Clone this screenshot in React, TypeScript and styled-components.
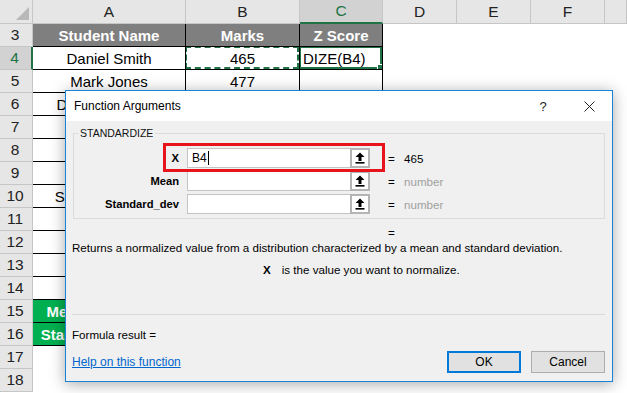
import styled, { createGlobalStyle } from "styled-components"

const GlobalStyle = createGlobalStyle`
  html, body {
    margin: 0;
    padding: 0;
    background: #fff;
  }
  body {
    font-family: "Liberation Sans", Arial, sans-serif;
  }
`

const Stage = styled.div`
  position: relative;
  width: 627px;
  height: 393px;
  overflow: hidden;
  background: #fff;
`

/* ---------- spreadsheet ---------- */

const Sheet = styled.div`
  display: grid;
  grid-template-columns: 33px 153px 114px 83px 74px 74px 74px 1fr;
  grid-template-rows: 24px;
  grid-auto-rows: 23px;
  font-family: "Liberation Sans", Arial, sans-serif;
  font-size: 15px;
  color: #000;
`

const Corner = styled.div`
  position: relative;
  background: #e6e6e6;
  border-right: 1px solid #c6c6c6;
  border-bottom: 1px solid #c6c6c6;
  box-sizing: border-box;
  &::after {
    content: "";
    position: absolute;
    right: 3px;
    bottom: 3px;
    border-style: solid;
    border-width: 0 0 13px 13px;
    border-color: transparent transparent #b8b8b8 transparent;
  }
`

const ColHeader = styled.div<{ $selected?: boolean }>`
  display: flex;
  align-items: center;
  justify-content: center;
  box-sizing: border-box;
  font-size: 15.5px;
  background: ${p => (p.$selected ? "#d2d2d2" : "#e6e6e6")};
  color: ${p => (p.$selected ? "#217346" : "#222")};
  border-right: 1px solid #c6c6c6;
  border-bottom: ${p => (p.$selected ? "2px solid #217346" : "1px solid #c6c6c6")};
`

const RowHeader = styled.div<{ $selected?: boolean }>`
  display: flex;
  align-items: center;
  justify-content: center;
  box-sizing: border-box;
  padding-right: 2px;
  font-size: 15.5px;
  background: ${p => (p.$selected ? "#d2d2d2" : "#e6e6e6")};
  color: ${p => (p.$selected ? "#217346" : "#222")};
  border-right: ${p => (p.$selected ? "2px solid #217346" : "1px solid #c6c6c6")};
  border-bottom: 1px solid #c6c6c6;
`

type CellKind = "head" | "body" | "total" | "empty"

const Cell = styled.div<{ $kind: CellKind; $align?: "left" | "center" }>`
  position: relative;
  display: flex;
  align-items: center;
  justify-content: ${p => (p.$align === "left" ? "flex-start" : "center")};
  padding: 0 3px;
  box-sizing: border-box;
  overflow: hidden;
  white-space: nowrap;
  font-weight: ${p => (p.$kind === "head" || p.$kind === "total" ? 700 : 400)};
  background: ${p =>
    p.$kind === "head" ? "#7f7f7f" : p.$kind === "total" ? "#00b050" : "#fff"};
  color: ${p => (p.$kind === "head" || p.$kind === "total" ? "#fff" : "#000")};
  border-right: ${p => (p.$kind === "empty" ? "none" : "1px solid #000")};
  border-bottom: ${p => (p.$kind === "empty" ? "none" : "1px solid #000")};
`

const CopyMarquee = styled.div`
  position: absolute;
  inset: -1px 0 0 -1px;
  border: 2px dashed #217346;
  pointer-events: none;
`

const ActiveFrame = styled.div`
  position: absolute;
  inset: -1px 0 0 -1px;
  border: 2px solid #217346;
  pointer-events: none;
  &::after {
    content: "";
    position: absolute;
    right: -4px;
    bottom: -4px;
    width: 5px;
    height: 5px;
    background: #217346;
    border: 1px solid #fff;
  }
`

const CellText = styled.span`
  position: relative;
`

/* ---------- dialog ---------- */

const Dialog = styled.div`
  position: absolute;
  left: 65px;
  top: 90px;
  width: 548px;
  height: 292px;
  box-sizing: border-box;
  border: 1px solid #1883d7;
  background: #f0f0f0;
  box-shadow: 0 2px 14px rgba(0, 0, 0, 0.35);
  display: flex;
  flex-direction: column;
  font-family: "Liberation Sans", Arial, sans-serif;
  font-size: 11.6px;
  color: #000;
`

const TitleBar = styled.div`
  height: 30px;
  flex: none;
  display: flex;
  align-items: center;
  background: #fff;
  padding-left: 8px;
`

const Title = styled.div`
  flex: 1;
  font-size: 12px;
`

const TitleButton = styled.div`
  width: 46px;
  height: 30px;
  display: flex;
  align-items: center;
  justify-content: center;
  font-size: 13px;
  color: #222;
`

const Body = styled.div`
  flex: 1;
  display: flex;
  flex-direction: column;
  padding: 12px 7px 0 7px;
`

const Group = styled.div`
  position: relative;
  height: 86px;
  box-sizing: border-box;
  border: 1px solid #dcdcdc;
  padding-top: 14px;
  display: flex;
  flex-direction: column;
  gap: 3px;
`

const Legend = styled.div`
  position: absolute;
  left: 4px;
  top: -7px;
  padding: 0 2px;
  background: #f0f0f0;
  font-size: 10.5px;
  line-height: 13px;
  color: #111;
`

const ArgRow = styled.div<{ $outside?: boolean }>`
  display: grid;
  grid-template-columns: 105px 191px auto 1fr;
  align-items: center;
  height: ${p => (p.$outside ? "14px" : "20px")};
  padding-left: ${p => (p.$outside ? "1px" : "0")};
  margin-top: ${p => (p.$outside ? "6px" : "0")};
`

const ArgLabel = styled.div`
  text-align: right;
  font-weight: 700;
  font-size: 11.2px;
`

const InputWrap = styled.div`
  display: flex;
  margin-left: 8px;
  height: 20px;
`

const Input = styled.div`
  flex: 1;
  box-sizing: border-box;
  border: 1px solid #c4c4c4;
  border-right: none;
  background: #fff;
  display: flex;
  align-items: center;
  padding-left: 4px;
  font-size: 12px;
`

const Caret = styled.span`
  display: inline-block;
  width: 1px;
  height: 14px;
  background: #000;
  margin-left: 1px;
`

const RefButton = styled.div`
  width: 20px;
  height: 20px;
  box-sizing: border-box;
  border: 2px solid #b4b4b4;
  background: #fff;
  display: flex;
  align-items: center;
  justify-content: center;
`

const Equals = styled.div`
  margin-left: 18px;
  width: 16px;
`

const ArgValue = styled.div<{ $hint?: boolean }>`
  color: ${p => (p.$hint ? "#a0a0a0" : "#000")};
`

const Highlight = styled.div`
  position: absolute;
  left: 89px;
  top: 9px;
  width: 222px;
  height: 29px;
  box-sizing: border-box;
  border: 3px solid #e8141c;
  pointer-events: none;
`

const Description = styled.div`
  margin-top: 2px;
  margin-left: -1px;
  white-space: nowrap;
`

const ArgHelp = styled.div`
  margin: 9px 0 0 190px;
  display: flex;
  gap: 11px;
`

const Bold = styled.span`
  font-weight: 700;
`

const Separator = styled.div`
  margin: 38px 0 0 -1px;
  height: 1px;
  background: #d9d9d9;
`

const FormulaResult = styled.div`
  margin-top: 13px;
  margin-left: -1px;
`

const Footer = styled.div`
  display: flex;
  align-items: center;
  margin-top: 10px;
  margin-left: -1px;
`

const HelpLink = styled.a`
  flex: 1;
  font-size: 12px;
  color: #0066cc;
  text-decoration: underline;
  cursor: pointer;
`

const Button = styled.button<{ $default?: boolean }>`
  width: 74px;
  height: 22px;
  margin-left: 10px;
  box-sizing: border-box;
  background: #e1e1e1;
  border: ${p => (p.$default ? "2px solid #0078d7" : "1px solid #adadad")};
  font-family: inherit;
  font-size: 12px;
  color: #000;
  padding: 0;
`

const ArrowIcon = () => (
  <svg width="10" height="12" viewBox="0 0 10 12">
    <path d="M5 0.5 L9.5 5 L6.5 5 L6.5 9 L3.5 9 L3.5 5 L0.5 5 Z" fill="#000" />
    <rect x="0.5" y="10" width="9" height="1.6" fill="#000" />
  </svg>
)

const CloseIcon = () => (
  <svg width="11" height="11" viewBox="0 0 11 11">
    <path d="M0.5 0.5 L10.5 10.5 M10.5 0.5 L0.5 10.5" stroke="#222" strokeWidth="1" />
  </svg>
)

const columns = ["A", "B", "C", "D", "E", "F", ""]

type RowData = {
  n: number
  kind: CellKind
  cells: string[]
}

const rows: RowData[] = [
  { n: 3, kind: "head", cells: ["Student Name", "Marks", "Z Score"] },
  { n: 4, kind: "body", cells: ["Daniel Smith", "465", "DIZE(B4)"] },
  { n: 5, kind: "body", cells: ["Mark Jones", "477", ""] },
  { n: 6, kind: "body", cells: ["David Beckham", "425", ""] },
  { n: 7, kind: "body", cells: ["Lisa Ray", "498", ""] },
  { n: 8, kind: "body", cells: ["Tom Hill", "444", ""] },
  { n: 9, kind: "body", cells: ["Rita Das", "456", ""] },
  { n: 10, kind: "body", cells: ["Sandra Williams", "480", ""] },
  { n: 11, kind: "body", cells: ["", "", ""] },
  { n: 12, kind: "body", cells: ["", "", ""] },
  { n: 13, kind: "body", cells: ["", "", ""] },
  { n: 14, kind: "body", cells: ["", "", ""] },
  { n: 15, kind: "total", cells: ["Mean of all Marks", "", ""] },
  { n: 16, kind: "total", cells: ["Standard Deviation", "", ""] },
  { n: 17, kind: "empty", cells: ["", "", ""] },
  { n: 18, kind: "empty", cells: ["", "", ""] },
]

const args = [
  { label: "X", value: "B4", result: "465" },
  { label: "Mean", value: "", result: "number" },
  { label: "Standard_dev", value: "", result: "number" },
]

const App = () => {
  return (
    <Stage>
      <GlobalStyle />
      <Sheet>
        <Corner />
        {columns.map((c, i) => (
          <ColHeader key={i} $selected={c === "C"}>
            {c}
          </ColHeader>
        ))}
        {rows.map(row => (
          <>
            <RowHeader key={`h${row.n}`} $selected={row.n === 4}>
              {row.n}
            </RowHeader>
            {row.cells.map((text, ci) => {
              const active = row.n === 4 && ci === 2
              const copied = row.n === 4 && ci === 1
              return (
                <Cell
                  key={`${row.n}-${ci}`}
                  $kind={row.kind}
                  $align={active ? "left" : "center"}
                >
                  <CellText>{text}</CellText>
                  {copied && <CopyMarquee />}
                  {active && <ActiveFrame />}
                </Cell>
              )
            })}
            {[0, 1, 2, 3].map(i => (
              <Cell key={`${row.n}-e${i}`} $kind="empty" />
            ))}
          </>
        ))}
      </Sheet>

      <Dialog>
        <TitleBar>
          <Title>Function Arguments</Title>
          <TitleButton>?</TitleButton>
          <TitleButton>
            <CloseIcon />
          </TitleButton>
        </TitleBar>
        <Body>
          <Group>
            <Legend>STANDARDIZE</Legend>
            {args.map(a => (
              <ArgRow key={a.label}>
                <ArgLabel>{a.label}</ArgLabel>
                <InputWrap>
                  <Input>
                    {a.value}
                    {a.value && <Caret />}
                  </Input>
                  <RefButton>
                    <ArrowIcon />
                  </RefButton>
                </InputWrap>
                <Equals>=</Equals>
                <ArgValue $hint={a.result === "number"}>{a.result}</ArgValue>
              </ArgRow>
            ))}
            <Highlight />
          </Group>
          <ArgRow $outside>
            <span />
            <span />
            <Equals>=</Equals>
            <span />
          </ArgRow>
          <Description>
            Returns a normalized value from a distribution characterized by a mean and standard deviation.
          </Description>
          <ArgHelp>
            <Bold>X</Bold>
            <span>is the value you want to normalize.</span>
          </ArgHelp>
          <Separator />
          <FormulaResult>Formula result =</FormulaResult>
          <Footer>
            <HelpLink>Help on this function</HelpLink>
            <Button $default>OK</Button>
            <Button>Cancel</Button>
          </Footer>
        </Body>
      </Dialog>
    </Stage>
  )
}

export default App
